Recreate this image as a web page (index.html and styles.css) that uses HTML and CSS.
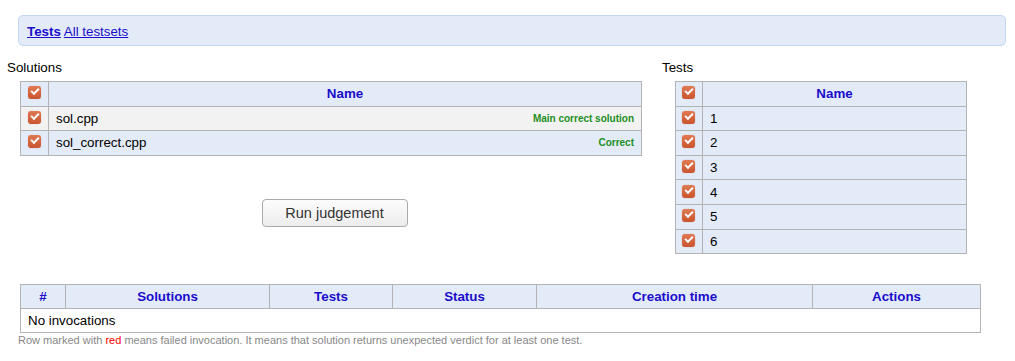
FILE: index.html
```html
<!DOCTYPE html>
<html>
<head>
<meta charset="utf-8">
<link rel="stylesheet" href="styles.css">
</head>
<body>
<div class="topbar"><a class="cur" href="#">Tests</a> <a href="#">All testsets</a></div>
<div class="main">
  <div class="left">
    <div class="label">Solutions</div>
    <table class="grid sol">
      <tr class="head"><td class="cb"><span class="chk"></span></td><td class="th">Name</td></tr>
      <tr class="gray"><td class="cb"><span class="chk"></span></td><td><div class="namecell"><span>sol.cpp</span><span class="tag">Main correct solution</span></div></td></tr>
      <tr class="blue"><td class="cb"><span class="chk"></span></td><td><div class="namecell"><span>sol_correct.cpp</span><span class="tag">Correct</span></div></td></tr>
    </table>
    <div class="btnrow"><button class="btn">Run judgement</button></div>
  </div>
  <div class="right">
    <div class="label">Tests</div>
    <table class="grid tst">
      <tr class="head"><td class="cb"><span class="chk"></span></td><td class="th">Name</td></tr>
      <tr class="blue"><td class="cb"><span class="chk"></span></td><td>1</td></tr>
      <tr class="blue"><td class="cb"><span class="chk"></span></td><td>2</td></tr>
      <tr class="blue"><td class="cb"><span class="chk"></span></td><td>3</td></tr>
      <tr class="blue"><td class="cb"><span class="chk"></span></td><td>4</td></tr>
      <tr class="blue"><td class="cb"><span class="chk"></span></td><td>5</td></tr>
      <tr class="blue"><td class="cb"><span class="chk"></span></td><td>6</td></tr>
    </table>
  </div>
</div>
<table class="grid inv">
  <tr class="head"><td class="th c1">#</td><td class="th c2">Solutions</td><td class="th c3">Tests</td><td class="th c4">Status</td><td class="th c5">Creation time</td><td class="th c6">Actions</td></tr>
  <tr class="white"><td colspan="6">No invocations</td></tr>
</table>
<div class="note">Row marked with <span class="red">red</span> means failed invocation. It means that solution returns unexpected verdict for at least one test.</div>
</body>
</html>
```
FILE: styles.css
```css
body {
  margin: 0;
  padding: 15px 0 0 0;
  font-family: "Liberation Sans", Arial, sans-serif;
  font-size: 13.33px;
  color: #000;
  background: #fff;
}
.topbar {
  margin: 0 9px 0 18px;
  height: 29px;
  border: 1px solid #c4d6f4;
  border-radius: 5px;
  background: #e3ebf8;
  padding: 0 8px;
  line-height: 31px;
  box-sizing: content-box;
}
.topbar a { color: #1a0dcc; text-decoration: underline; }
.topbar a.cur { font-weight: bold; }
.main {
  display: flex;
  padding-left: 7px;
  margin-top: 14px;
}
.left { width: 655px; }
.right { flex: 1; }
.label { height: 18px; line-height: 15px; margin-bottom: 3px; }
.grid {
  border-collapse: collapse;
  margin-left: 13px;
}
.grid td {
  border: 1px solid #b3b3b3;
  padding: 0 7px;
  height: 23.6px;
  vertical-align: middle;
}
.sol { width: 622px; }
.tst { width: 292px; }
.grid td.cb { width: 13px; padding: 0 7px 0 7px; text-align: center; }
.tst td.cb { width: 13px; padding: 0 7px 0 6px; }
.head td { background: #e3ebf8; }
.th { text-align: center; font-weight: bold; color: #1a0dcc; }
.gray td { background: #f2f2f2; }
.blue td { background: #e3ebf8; }
.white td { background: #fff; }
.chk {
  display: inline-block;
  width: 13px;
  height: 13px;
  border-radius: 3px;
  background: linear-gradient(#e07a52, #c9542e);
  box-shadow: 0 0 1px #c88;
  position: relative;
  vertical-align: -1px;
}
.chk::after {
  content: "";
  position: absolute;
  left: 3px;
  top: 2px;
  width: 6px;
  height: 3px;
  border-left: 2px solid #fff;
  border-bottom: 2px solid #fff;
  transform: rotate(-45deg);
}
.namecell { display: flex; justify-content: space-between; align-items: center; }
.tag { font-size: 10px; font-weight: bold; color: #1d8f1d; }
.btnrow { display: flex; justify-content: center; margin-top: 43px; }
.btn {
  font-family: "Liberation Sans", Arial, sans-serif;
  font-size: 14.5px;
  color: #333;
  width: 146px;
  height: 28px;
  border: 1px solid #aaa;
  border-radius: 4px;
  background: linear-gradient(#fdfdfd, #ececec);
  padding: 0;
}
.inv { width: 961px; margin-left: 20px; margin-top: 30px; }
.inv td { height: 23px; }
.inv td.c1 { width: 30px; }
.inv td.c2 { width: 189px; }
.inv td.c3 { width: 108px; }
.inv td.c4 { width: 129px; }
.inv td.c5 { width: 261px; }
.note { margin-left: 18px; margin-top: 1px; font-size: 11px; color: #888; }
.red { color: #f00; }
```
